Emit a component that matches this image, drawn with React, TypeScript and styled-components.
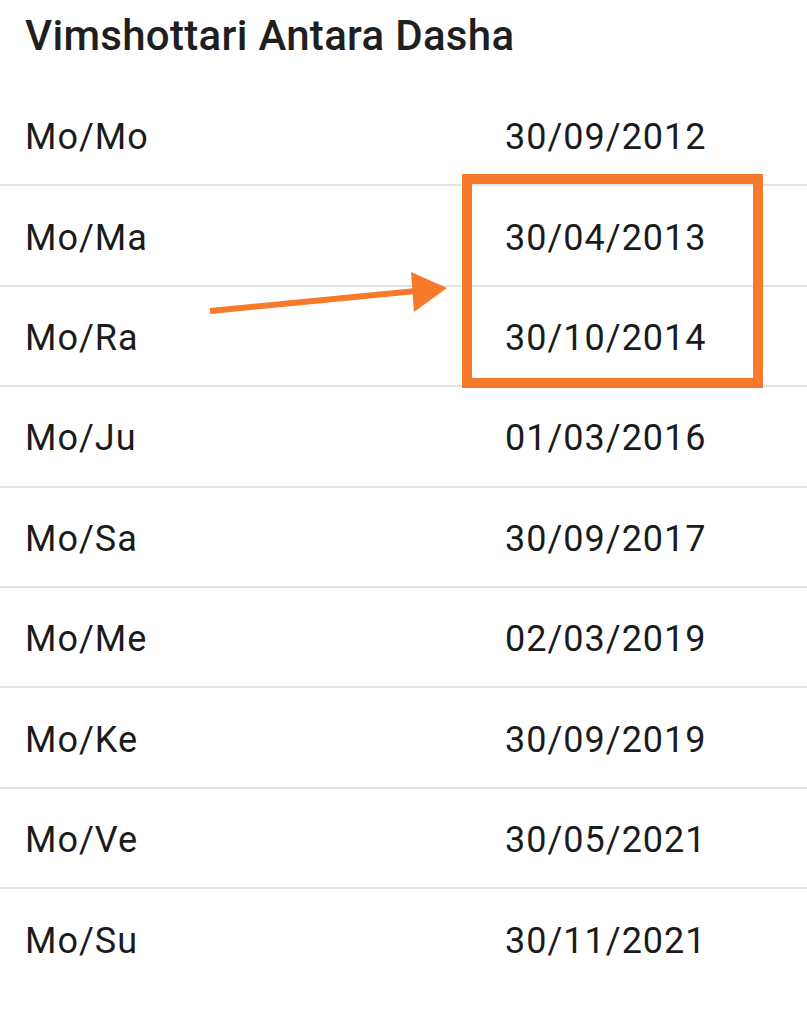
import React from "react";
import styled, { createGlobalStyle } from "styled-components";

const GlobalStyle = createGlobalStyle`
  html, body {
    margin: 0;
    padding: 0;
    background: #ffffff;
  }
  body {
    font-family: Roboto, "Noto Sans", "Liberation Sans", sans-serif;
    color: #1b1b1b;
    -webkit-font-smoothing: antialiased;
  }
`;

const Page = styled.div`
  position: relative;
  width: 807px;
  min-height: 1024px;
  background: #ffffff;
  overflow: hidden;
`;

const Title = styled.h1`
  margin: 0;
  box-sizing: border-box;
  height: 86px;
  padding: 11px 0 0 25px;
  font-size: 42px;
  line-height: 50px;
  font-weight: 500;
  letter-spacing: 0.3px;
  color: #1f1f1f;
`;

const List = styled.div`
  display: flex;
  flex-direction: column;
`;

const Row = styled.div<{ $last?: boolean }>`
  box-sizing: border-box;
  height: 100.4px;
  display: grid;
  grid-template-columns: 480px 1fr;
  align-items: center;
  padding: 4px 0 0 25px;
  border-bottom: ${(p) => (p.$last ? "none" : "2px solid #e3e3e3")};
  font-size: 36px;
  line-height: 44px;
  font-weight: 400;
  letter-spacing: 1px;
`;

const Cell = styled.span`
  white-space: nowrap;
`;

const Annotation = styled.svg`
  position: absolute;
  left: 0;
  top: 0;
  width: 807px;
  height: 1024px;
  pointer-events: none;
`;

const ORANGE = "#f77a2c";

const rows: [string, string][] = [
  ["Mo/Mo", "30/09/2012"],
  ["Mo/Ma", "30/04/2013"],
  ["Mo/Ra", "30/10/2014"],
  ["Mo/Ju", "01/03/2016"],
  ["Mo/Sa", "30/09/2017"],
  ["Mo/Me", "02/03/2019"],
  ["Mo/Ke", "30/09/2019"],
  ["Mo/Ve", "30/05/2021"],
  ["Mo/Su", "30/11/2021"],
];

export default function App() {
  return (
    <Page>
      <GlobalStyle />
      <Title>Vimshottari Antara Dasha</Title>
      <List>
        {rows.map(([name, date], i) => (
          <Row key={name} $last={i === rows.length - 1}>
            <Cell>{name}</Cell>
            <Cell>{date}</Cell>
          </Row>
        ))}
      </List>
      <Annotation viewBox="0 0 807 1024">
        <rect
          x={467}
          y={179}
          width={291}
          height={204}
          fill="none"
          stroke={ORANGE}
          strokeWidth={10}
        />
        <line
          x1={210}
          y1={311}
          x2={416}
          y2={291}
          stroke={ORANGE}
          strokeWidth={6}
          strokeLinecap="butt"
        />
        <polygon points="411,272 447,288 414,312" fill={ORANGE} />
      </Annotation>
    </Page>
  );
}
